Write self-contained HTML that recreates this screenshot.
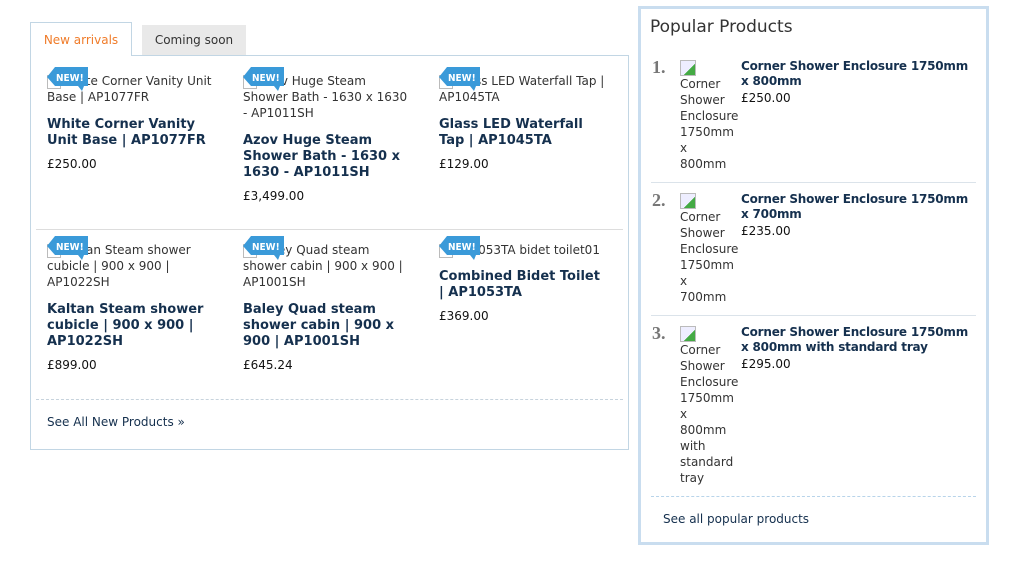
<!DOCTYPE html>
<html><head><meta charset="utf-8"><style>
*{margin:0;padding:0;box-sizing:border-box}
body{width:1023px;height:561px;background:#fff;font-family:"DejaVu Sans","Liberation Sans",sans-serif;font-size:12px;color:#1a1a1a;position:relative;overflow:hidden}
.a{position:absolute}
.tab1{left:30px;top:22px;width:102px;height:34px;border:1px solid #c2d6e4;border-bottom:none;background:#fff;color:#f07c2a;font-size:12px;padding-top:10px;text-align:center;z-index:2}
.tab2{left:142px;top:25px;width:104px;height:30px;background:#e9e9e9;color:#333;padding-top:8px;text-align:center}
.box{left:30px;top:55px;width:599px;height:395px;border:1px solid #c2d6e4}
.p{position:absolute;width:168px}
.alt{font-size:12px;line-height:16px;color:#333;position:relative;text-indent:16px}
.alt .ic{position:absolute;left:0;top:2px;width:14px;height:14px;border:1px solid #bbb}
.t{font-weight:bold;font-size:13px;line-height:16px;color:#15304e;margin-top:12px}
.pr{font-size:12px;margin-top:8px;color:#111}
.badge{position:absolute;left:0;top:-7px}
.hr{left:36px;width:587px;height:1px;background:#ddd}
.dash{border-top:1px dashed #c7d3dd;height:0}
.rbox{left:638px;top:6px;width:351px;height:539px;border:3px solid #c9ddef}
.num{position:absolute;left:652px;font-family:"Liberation Serif",serif;font-weight:bold;font-size:18px;color:#777}
.ralt{position:absolute;left:680px;width:54px;font-size:12px;line-height:16px;color:#333}
.ralt i{display:block;width:16px;height:16px;border:1px solid #bbb;background:linear-gradient(135deg,#eef 60%,#4a4 60%)}
.rt{position:absolute;left:741px;width:237px;font-weight:bold;font-size:12px;line-height:15px;color:#15304e;letter-spacing:-0.2px}
.rp{font-weight:normal;color:#111;margin-top:2px;font-size:12px;letter-spacing:0}
.rl{left:651px;width:325px;height:1px;background:#dbe3ea}
</style></head><body>
<div class="a tab1">New arrivals</div>
<div class="a tab2">Coming soon</div>
<div class="a box"></div>

<svg width="0" height="0" style="position:absolute"><defs><g id="nb"><polygon points="0,11 8,1 41,1 41,20 37,20 35,25 31,20 8,20" fill="#3a9ad9"/><text x="9" y="15" font-family="DejaVu Sans Condensed,DejaVu Sans,sans-serif" font-weight="bold" font-size="10" fill="#fff">NEW!</text></g></defs></svg>

<div class="p" style="left:47px;top:73px"><div class="alt"><span class="ic"></span>White Corner Vanity Unit Base | AP1077FR<svg class="badge" width="42" height="26"><use href="#nb"/></svg></div><div class="t">White Corner Vanity Unit Base | AP1077FR</div><div class="pr">£250.00</div></div>
<div class="p" style="left:243px;top:73px"><div class="alt"><span class="ic"></span>Azov Huge Steam Shower Bath - 1630 x 1630 - AP1011SH<svg class="badge" width="42" height="26"><use href="#nb"/></svg></div><div class="t">Azov Huge Steam Shower Bath - 1630 x 1630 - AP1011SH</div><div class="pr">£3,499.00</div></div>
<div class="p" style="left:439px;top:73px"><div class="alt"><span class="ic"></span>Glass LED Waterfall Tap | AP1045TA<svg class="badge" width="42" height="26"><use href="#nb"/></svg></div><div class="t">Glass LED Waterfall Tap | AP1045TA</div><div class="pr">£129.00</div></div>

<div class="a hr" style="top:229px"></div>

<div class="p" style="left:47px;top:242px"><div class="alt"><span class="ic"></span>Kaltan Steam shower cubicle | 900 x 900 | AP1022SH<svg class="badge" width="42" height="26"><use href="#nb"/></svg></div><div class="t">Kaltan Steam shower cubicle | 900 x 900 | AP1022SH</div><div class="pr">£899.00</div></div>
<div class="p" style="left:243px;top:242px"><div class="alt"><span class="ic"></span>Baley Quad steam shower cabin | 900 x 900 | AP1001SH<svg class="badge" width="42" height="26"><use href="#nb"/></svg></div><div class="t">Baley Quad steam shower cabin | 900 x 900 | AP1001SH</div><div class="pr">£645.24</div></div>
<div class="p" style="left:439px;top:242px"><div class="alt"><span class="ic"></span>AP1053TA bidet toilet01<svg class="badge" width="42" height="26"><use href="#nb"/></svg></div><div class="t" style="margin-top:11px">Combined Bidet Toilet | AP1053TA</div><div class="pr">£369.00</div></div>

<div class="a dash" style="left:36px;top:399px;width:587px"></div>
<div class="a" style="left:47px;top:415px;color:#15304e">See All New Products »</div>

<div class="a rbox"></div>
<div class="a" style="left:650px;top:17px;font-size:17px;color:#333">Popular Products</div>

<div class="num" style="top:57px">1.</div>
<div class="ralt" style="top:60px"><i></i>Corner Shower Enclosure 1750mm x 800mm</div>
<div class="rt" style="top:59px">Corner Shower Enclosure 1750mm x 800mm<div class="rp">£250.00</div></div>
<div class="a rl" style="top:182px"></div>

<div class="num" style="top:190px">2.</div>
<div class="ralt" style="top:193px"><i></i>Corner Shower Enclosure 1750mm x 700mm</div>
<div class="rt" style="top:192px">Corner Shower Enclosure 1750mm x 700mm<div class="rp">£235.00</div></div>
<div class="a rl" style="top:315px"></div>

<div class="num" style="top:323px">3.</div>
<div class="ralt" style="top:326px"><i></i>Corner Shower Enclosure 1750mm x 800mm with standard tray</div>
<div class="rt" style="top:325px">Corner Shower Enclosure 1750mm x 800mm with standard tray<div class="rp">£295.00</div></div>

<div class="a dash" style="left:651px;top:496px;width:325px;border-top-color:#b8d4ea"></div>
<div class="a" style="left:663px;top:512px;color:#15304e">See all popular products</div>
</body></html>
